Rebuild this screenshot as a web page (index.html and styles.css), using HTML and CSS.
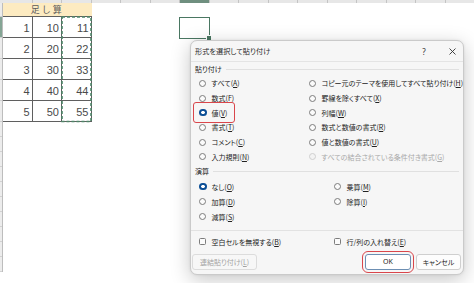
FILE: index.html
```html
<!DOCTYPE html>
<html lang="ja">
<head>
<meta charset="utf-8">
<link rel="stylesheet" href="styles.css">
</head>
<body>
<div class="screen">
  <div class="colhdr">
    <span class="corner"></span>
    <span class="ch"></span><span class="ch"></span><span class="ch"></span><span class="ch"></span>
    <span class="ch"></span><span class="ch"></span><span class="ch on"></span><span class="ch"></span>
    <span class="ch"></span><span class="ch"></span><span class="ch"></span><span class="ch"></span>
    <span class="ch"></span><span class="ch"></span><span class="ch"></span><span class="ch"></span>
  </div>
  <div class="sheet-body">
    <div class="rowhdr">
      <span class="rh h14"></span>
      <span class="rh r21 on"></span><span class="rh r21"></span><span class="rh r21"></span><span class="rh r21"></span><span class="rh r21"></span>
      <span class="rh r15"></span><span class="rh r15"></span><span class="rh r15"></span><span class="rh r15"></span><span class="rh r15"></span>
      <span class="rh r15"></span><span class="rh r15"></span><span class="rh r15"></span><span class="rh r15"></span><span class="rh r15"></span>
    </div>
    <div class="cells">
      <div class="tbl">
        <div class="thead">足し算</div>
        <div class="trow"><span class="c">1</span><span class="c">10</span><span class="c">11</span></div>
        <div class="trow"><span class="c">2</span><span class="c">20</span><span class="c">22</span></div>
        <div class="trow"><span class="c">3</span><span class="c">30</span><span class="c">33</span></div>
        <div class="trow"><span class="c">4</span><span class="c">40</span><span class="c">44</span></div>
        <div class="trow"><span class="c">5</span><span class="c">50</span><span class="c">55</span></div>
        <svg class="marquee" width="31" height="107" viewBox="0 0 31 107"><rect x="1" y="1" width="29" height="104.5" fill="none" stroke="#4f8669" stroke-width="1.6" stroke-dasharray="3 2"/></svg>
      </div>
      <div class="active-cell"></div>
    </div>
  </div>

  <div class="dialog">
    <div class="titlebar">
      <span class="title">形式を選択して貼り付け</span>
      <span class="help">?</span>
      <span class="close"><svg width="7" height="7" viewBox="0 0 7 7"><path d="M0.5 0.5L6.5 6.5M6.5 0.5L0.5 6.5" stroke="#333" stroke-width="0.9"/></svg></span>
    </div>
    <div class="group-label"><span>貼り付け</span><i class="rule"></i></div>
    <div class="opts paste">
      <span class="opt"><span class="radio"></span>すべて(<u>A</u>)</span>
      <span class="opt"><span class="radio"></span>数式(<u>F</u>)</span>
      <span class="opt mark"><span class="radio on"></span>値(<u>V</u>)</span>
      <span class="opt"><span class="radio"></span>書式(<u>T</u>)</span>
      <span class="opt"><span class="radio"></span>コメント(<u>C</u>)</span>
      <span class="opt"><span class="radio"></span>入力規則(<u>N</u>)</span>
      <span class="opt"><span class="radio"></span>コピー元のテーマを使用してすべて貼り付け(<u>H</u>)</span>
      <span class="opt"><span class="radio"></span>罫線を除くすべて(<u>X</u>)</span>
      <span class="opt"><span class="radio"></span>列幅(<u>W</u>)</span>
      <span class="opt"><span class="radio"></span>数式と数値の書式(<u>R</u>)</span>
      <span class="opt"><span class="radio"></span>値と数値の書式(<u>U</u>)</span>
      <span class="opt disabled"><span class="radio"></span>すべての結合されている条件付き書式(<u>G</u>)</span>
    </div>
    <div class="group-label"><span>演算</span><i class="rule"></i></div>
    <div class="opts ops">
      <span class="opt"><span class="radio on"></span>なし(<u>O</u>)</span>
      <span class="opt"><span class="radio"></span>加算(<u>D</u>)</span>
      <span class="opt"><span class="radio"></span>減算(<u>S</u>)</span>
      <span class="opt"><span class="radio"></span>乗算(<u>M</u>)</span>
      <span class="opt"><span class="radio"></span>除算(<u>I</u>)</span>
    </div>
    <div class="sep"></div>
    <div class="checks">
      <span class="opt"><span class="check"></span>空白セルを無視する(<u>B</u>)</span>
      <span class="opt"><span class="check"></span>行/列の入れ替え(<u>E</u>)</span>
    </div>
    <div class="buttons">
      <span class="btn disabled-btn">連結貼り付け(<u>L</u>)</span>
      <span class="btn ok">OK</span>
      <span class="btn cancel">キャンセル</span>
    </div>
  </div>
</div>
</body>
</html>
```

FILE: styles.css
```css
* { box-sizing: border-box; margin: 0; padding: 0; }
html, body { margin: 0; background: #fff; }
body {
  width: 474px;
  height: 283px;
  overflow: hidden;
  font-family: "Noto Sans CJK JP", "Noto Sans", sans-serif;
}
.screen { position: relative; width: 474px; height: 283px; overflow: hidden; }

/* column header strip */
.colhdr { display: flex; height: 3px; background: #e7e7e7; }
.corner { width: 3px; flex: none; }
.ch { width: 29.5px; flex: none; border-right: 1px solid #c4c4c4; }
.ch.on { background: #6f8f7f; }

.sheet-body { display: flex; }
.rowhdr {
  width: 3px; flex: none;
  display: flex; flex-direction: column;
  background: #ececec;
  border-right: 1px solid #bdbdbd;
}
.rh { display: block; border-bottom: 1px solid #d2d2d2; flex: none; }
.h14 { height: 14px; }
.r21 { height: 21px; }
.r15 { height: 15px; }
.rh.on { background: #85a595; }

.cells { display: flex; align-items: flex-start; }
.tbl { position: relative; width: 88.5px; flex: none; }
.thead {
  height: 14px;
  background: #fdebc1;
  color: #5a5a5a;
  font-size: 9px;
  line-height: 13px;
  text-align: center;
  letter-spacing: 2px;
  border-bottom: 1px solid #5f5f5f;
}
.trow { display: flex; height: 21px; border-bottom: 1px solid #5f5f5f; }
.c {
  width: 29.5px; flex: none;
  border-right: 1px solid #5f5f5f;
  display: flex; justify-content: flex-end; align-items: flex-end;
  padding: 0 2px 3px 0;
  font-family: "Liberation Sans", sans-serif;
  font-size: 11px;
  line-height: 1;
  color: #4a4a4a;
}
.marquee { position: absolute; left: 58px; top: 13px; }

.active-cell {
  position: relative;
  flex: none;
  width: 31.5px;
  height: 22px;
  margin-left: 87px;
  margin-top: 13.5px;
  border: 1.6px solid #4a7762;
}
.active-cell::after {
  content: "";
  position: absolute;
  right: -3px; bottom: -3px;
  width: 4px; height: 4px;
  background: #4a7762;
  border: 1px solid #fff;
}

/* dialog */
.dialog {
  position: absolute;
  left: 190px; top: 40px;
  width: 274px; height: 235px;
  background: #f6f6f6;
  border: 1px solid #cacaca;
  border-radius: 7px;
  box-shadow: 0 5px 20px rgba(0,0,0,0.22), 0 0 3px rgba(0,0,0,0.08);
  color: #222;
  font-size: 7px;
  font-feature-settings: "palt";
}
.titlebar {
  display: flex; align-items: center;
  height: 21px;
  padding: 0 6px 0 4px;
  border-bottom: 1px solid #e4e4e4;
  font-size: 7.2px;
}
.title { flex: 1; color: #2a2a2a; }
.help {
  width: 10px; text-align: center;
  font-family: "Noto Sans", sans-serif;
  font-size: 8px;
  color: #333;
  margin-right: 18px;
}
.close { width: 10px; display: flex; justify-content: center; }

.group-label {
  display: flex; align-items: center;
  height: 14px;
  padding: 0 4px;
}
.rule { flex: 1; height: 0; border-top: 1px solid #e0e0e0; margin-left: 4px; }

.opts { display: grid; grid-auto-flow: column; padding-left: 8px; }
.paste { grid-template-columns: 110px 1fr; grid-template-rows: repeat(6, 14.7px); }
.ops { grid-template-columns: 135px 1fr; grid-template-rows: repeat(3, 15px); margin-top: 1px; }

.opt {
  position: relative;
  display: flex; align-items: center;
  white-space: nowrap;
  justify-self: start;
}
.opt u { text-underline-offset: 1px; text-decoration-thickness: 0.6px; }
.opt.disabled { color: #a9a9a9; }
.opt.disabled .radio { border-color: #cfcfcf; background: #f3f3f3; }
.mark::after {
  content: "";
  position: absolute;
  top: -3.5px; bottom: -3px; left: -6px; right: -8px;
  border: 1.5px solid #d9464b;
  border-radius: 3px;
}

.radio {
  width: 7px; height: 7px; flex: none;
  border: 1px solid #7c7c7c;
  border-radius: 50%;
  background: #fbfbfb;
  margin-right: 5.5px;
}
.radio.on {
  border: none;
  width: 7.5px; height: 7.5px;
  margin-right: 5px;
  background: radial-gradient(circle, #fff 0 1.5px, #0c4f96 2px);
}
.check {
  width: 7px; height: 7px; flex: none;
  border: 1px solid #7c7c7c;
  border-radius: 1.5px;
  background: #fbfbfb;
  margin-right: 5.5px;
}

.sep { margin-top: 5.5px; border-top: 1px solid #e2e2e2; }
.checks {
  display: grid;
  grid-template-columns: 135px 1fr;
  height: 14px;
  margin-top: 4px;
  padding-left: 8px;
  align-items: center;
}
.buttons {
  display: flex;
  gap: 5px;
  height: 15.5px;
  margin-top: 5.5px;
  padding: 0 2px 0 1px;
}
.btn {
  display: flex; align-items: center; justify-content: center;
  height: 15.5px;
  border-radius: 3px;
  white-space: nowrap;
}
.disabled-btn {
  width: 65px;
  background: #f7f7f7;
  border: 1px solid #dcdcdc;
  color: #a3a3a3;
}
.ok {
  width: 46px;
  margin-left: auto;
  background: #fff;
  border: 1px solid #6d8fb3;
  font-family: "Noto Sans", sans-serif;
  outline: 1.5px solid #d9464b;
  outline-offset: 2px;
}
.cancel {
  width: 45px;
  background: #fdfdfd;
  border: 1px solid #cfcfcf;
}
```
